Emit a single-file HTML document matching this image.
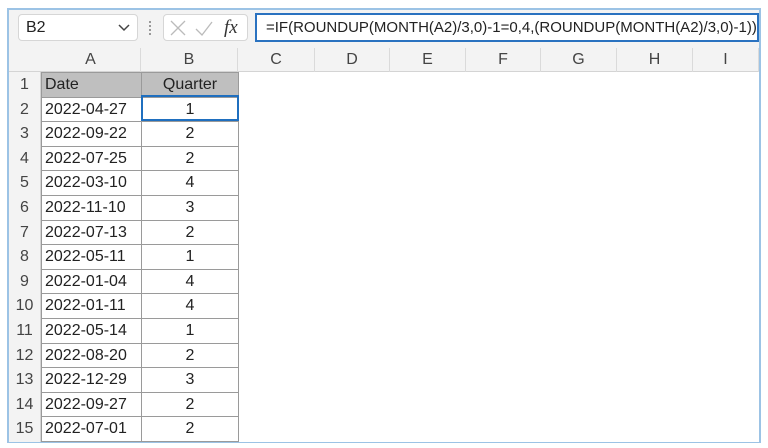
<!DOCTYPE html><html><head><style>
body{margin:0;width:768px;height:448px;background:#fff;font-family:"Liberation Sans",sans-serif;position:relative;overflow:hidden}
.a{position:absolute;box-sizing:border-box}
.t{font-size:16px;color:#222}
</style></head><body>
<div class="a" style="left:7px;top:8px;width:754px;height:435px;border:2px solid #9cc3e5;border-right-width:2px;background:#f3f3f3"></div>
<div class="a" style="left:18px;top:14px;width:120px;height:27px;background:#fff;border:1px solid #d6d6d6;border-radius:4px"></div>
<div class="a t" style="left:26px;top:19px">B2</div>
<svg class="a" style="left:118px;top:23px" width="12" height="10"><path d="M1 2 L6 7 L11 2" stroke="#444" stroke-width="1.5" fill="none"/></svg>
<div class="a" style="left:149px;top:21px;width:2px;height:14px;border-left:2px dotted #999"></div>
<div class="a" style="left:163px;top:14px;width:85px;height:27px;background:#fff;border:1px solid #d6d6d6;border-radius:4px"></div>
<svg class="a" style="left:168px;top:18px" width="80" height="20"><path d="M3 3 L17 17 M17 3 L3 17" stroke="#bbb" stroke-width="1.3"/><path d="M28 11 L34 17 L44 4" stroke="#bbb" stroke-width="1.3" fill="none"/><text x="56" y="15" font-family="Liberation Serif,serif" font-style="italic" font-size="19" fill="#333">fx</text></svg>
<div class="a" style="left:255px;top:13px;width:504px;height:29px;background:#fff;border:2px solid #2a72c0;overflow:hidden"><div style="position:absolute;left:9px;top:4px;white-space:nowrap;font-size:15px;color:#222">=IF(ROUNDUP(MONTH(A2)/3,0)-1=0,4,(ROUNDUP(MONTH(A2)/3,0)-1))</div></div>
<div class="a" style="left:9px;top:47px;width:750px;height:25px;background:#f3f3f3;border-bottom:1px solid #d4d4d4"></div>
<div class="a" style="left:9px;top:72px;width:32px;height:370px;background:#f3f3f3;border-right:1px solid #d4d4d4"></div>
<div class="a" style="left:41px;top:72px;width:718px;height:370px;background:#fff"></div>
<div id="g"></div>
<script>
var cols=[[41,141,'A'],[141,238,'B'],[238,315,'C'],[315,390,'D'],[390,466,'E'],[466,541,'F'],[541,617,'G'],[617,693,'H'],[693,759,'I']];
var h='';
cols.forEach(function(c){h+='<div class="a t" style="left:'+c[0]+'px;top:48px;width:'+(c[1]-c[0])+'px;height:24px;line-height:24px;text-align:center;color:#444;border-right:1px solid #dadada">'+c[2]+'</div>';});
var d=['2022-04-27','2022-09-22','2022-07-25','2022-03-10','2022-11-10','2022-07-13','2022-05-11','2022-01-04','2022-01-11','2022-05-14','2022-08-20','2022-12-29','2022-09-27','2022-07-01'];
var q=[1,2,2,4,3,2,1,4,4,1,2,3,2,2];
var rh=24.6;
for(var i=0;i<15;i++){var y=72+i*rh;
h+='<div class="a t" style="left:9px;top:'+(y+2)+'px;width:31px;height:22px;line-height:22px;text-align:center;color:#444">'+(i+1)+'</div>';
var bg=i==0?'#bfbfbf':'#fff';
h+='<div class="a t" style="left:41px;top:'+y+'px;width:101px;height:'+(rh+1)+'px;line-height:'+rh+'px;padding-left:3px;background:'+bg+';border:1px solid #9a9a9a">'+(i==0?'Date':d[i-1])+'</div>';
h+='<div class="a t" style="left:141px;top:'+y+'px;width:98px;height:'+(rh+1)+'px;line-height:'+rh+'px;text-align:center;background:'+bg+';border:1px solid #9a9a9a">'+(i==0?'Quarter':q[i-1])+'</div>';}
h+='<div class="a" style="left:141px;top:95px;width:98px;height:26px;border:2px solid #1f6fbf"></div>';
document.getElementById('g').innerHTML=h;
</script>
</body></html>
